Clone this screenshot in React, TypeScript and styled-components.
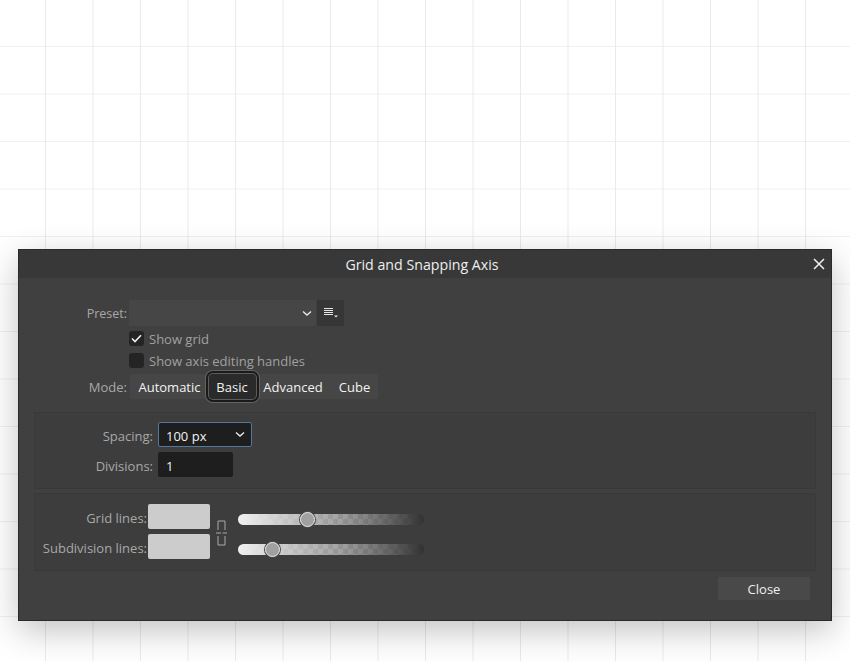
import React from "react";
import styled, { createGlobalStyle } from "styled-components";

const GlobalStyle = createGlobalStyle`
  html, body {
    margin: 0;
    height: 100%;
    overflow: hidden;
    background: #fff;
  }
  * {
    box-sizing: border-box;
  }
`;

const Canvas = styled.div`
  width: 850px;
  height: 661px;
  padding: 249px 18px 0;
  background-color: #fff;
  background-image: linear-gradient(to right, #eaeaec 1px, transparent 1px),
    linear-gradient(to bottom, #f0f0f1 1px, transparent 1px);
  background-size: 47.5px 47.5px;
  background-position: 45px 46px;
  font-family: "Open Sans", "Noto Sans", sans-serif;
  font-size: 13px;
`;

const Dialog = styled.div`
  width: 814px;
  height: 372px;
  background: #404040;
  border: 1px solid #2a2a2a;
  box-shadow: 0 10px 32px rgba(0, 0, 0, 0.24);
  display: flex;
  flex-direction: column;
`;

const TitleBar = styled.div`
  height: 28px;
  flex: none;
  background: #383838;
  color: #eee;
  font-size: 14.2px;
  padding-right: 6px;
  display: flex;
  align-items: center;
  justify-content: center;
  position: relative;
`;

const CloseX = styled.svg`
  position: absolute;
  right: 6px;
  top: 8px;
  width: 12px;
  height: 12px;
`;

const Body = styled.div`
  flex: 1;
  padding: 22px 15px 0;
  display: flex;
  flex-direction: column;
`;

const Row = styled.div<{ $h: number; $mb?: number }>`
  display: flex;
  align-items: center;
  height: ${(p) => p.$h}px;
  margin-bottom: ${(p) => p.$mb ?? 0}px;
`;

const Label = styled.div<{ $w: number; $gap?: number }>`
  width: ${(p) => p.$w}px;
  margin-right: ${(p) => p.$gap ?? 2}px;
  flex: none;
  text-align: right;
  color: #a8a8a8;
  white-space: nowrap;
`;

const PresetLabel = styled(Label)`
  font-size: 12.5px;
`;

const PanelLabel = styled(Label)`
  padding-top: 2px;
`;

const PresetSelect = styled.div`
  width: 187px;
  height: 26px;
  background: #464646;
  display: flex;
  align-items: center;
  justify-content: flex-end;
  padding-right: 4px;
`;

const MenuButton = styled.div`
  width: 27px;
  height: 26px;
  margin-left: 1px;
  background: #363636;
  display: flex;
  align-items: center;
  justify-content: center;
`;

const CheckRow = styled.div<{ $mb?: number }>`
  display: flex;
  align-items: center;
  gap: 5px;
  height: 15px;
  margin-left: 95px;
  margin-bottom: ${(p) => p.$mb ?? 0}px;
  color: #a0a0a0;
`;

const CheckBox = styled.div`
  width: 15px;
  height: 15px;
  border-radius: 3px;
  background: #242424;
  display: flex;
  align-items: center;
  justify-content: center;
`;

const Segments = styled.div`
  display: flex;
  align-items: center;
  height: 25px;
  margin-left: 1px;
  background: #464646;
  border-radius: 2px;
`;

const Segment = styled.div<{ $w: number; $pl?: number }>`
  width: ${(p) => p.$w}px;
  height: 25px;
  padding-left: ${(p) => p.$pl ?? 0}px;
  display: flex;
  align-items: center;
  justify-content: center;
  color: #f2f2f2;
  white-space: nowrap;
`;

const ActiveSegment = styled(Segment)`
  margin: 0 2.5px;
  background: #2a2a2a;
  border-radius: 4px;
  box-shadow: 0 0 0 1px #5c5c5c, 0 0 0 3px #1a1a1a, 0 0 0 4px #626262;
`;

const Panel = styled.div<{ $h: number; $mb?: number }>`
  height: ${(p) => p.$h}px;
  margin-bottom: ${(p) => p.$mb ?? 0}px;
  background: #3d3d3d;
  border: 1px solid #393939;
  flex: none;
`;

const SpacingPanel = styled(Panel)`
  padding-top: 9px;
`;

const SpacingSelect = styled.div`
  width: 94px;
  height: 25px;
  background: #1e1e1e;
  border: 1px solid #52789b;
  border-radius: 2px;
  color: #f2f2f2;
  display: flex;
  align-items: center;
  justify-content: space-between;
  padding: 0 6px 0 7px;
`;

const FieldValue = styled.span`
  padding-top: 2px;
`;

const NumberInput = styled.div`
  width: 75px;
  height: 25px;
  background: #1e1e1e;
  border-radius: 2px;
  color: #f2f2f2;
  display: flex;
  align-items: center;
  padding-left: 8px;
`;

const ColourPanel = styled(Panel)`
  display: flex;
  padding-top: 10px;
`;

const ColourCol = styled.div`
  display: flex;
  flex-direction: column;
  gap: 5px;
`;

const Swatch = styled.div`
  width: 62px;
  height: 25px;
  background: #cccccc;
  border-radius: 2px;
`;

const LinkIcon = styled.svg`
  width: 11px;
  height: 26px;
  margin: 16px 0 0 6px;
  flex: none;
`;

const SliderCol = styled.div`
  display: flex;
  flex-direction: column;
  gap: 19px;
  margin: 10px 0 0 11px;
`;

const Track = styled.div`
  position: relative;
  width: 186px;
  height: 11px;
  border-radius: 6px;
  background-color: #3d3d3d;
  background-image: linear-gradient(to right, rgba(240, 240, 240, 1) 0, rgba(240, 240, 240, 0.2) 55%, transparent 100%),
    linear-gradient(to right, transparent 55%, rgba(50, 50, 50, 1) 100%),
    conic-gradient(#8f8f8f 25%, #7c7c7c 0 50%, #8f8f8f 0 75%, #7c7c7c 0);
  background-size: 100% 100%, 100% 100%, 10px 10px;
`;

const Thumb = styled.div`
  position: absolute;
  top: 50%;
  width: 15px;
  height: 15px;
  margin: -7.5px 0 0 -7.5px;
  border-radius: 50%;
  background: #a0a0a0;
  border: 1.5px solid #ececec;
  box-shadow: 0 0 0 1px #4a4a4a;
`;

const Footer = styled.div`
  display: flex;
  justify-content: flex-end;
  padding-right: 6px;
`;

const CloseButton = styled.div`
  width: 92px;
  height: 23px;
  background: #494949;
  color: #f0f0f0;
  display: flex;
  align-items: center;
  justify-content: center;
`;

const Chevron = () => (
  <svg width="10" height="7" viewBox="0 0 10 7">
    <path d="M1 1.5 L5 5 L9 1.5" fill="none" stroke="#e8e8e8" strokeWidth="1.4" />
  </svg>
);

export default function App() {
  return (
    <>
      <GlobalStyle />
      <Canvas>
        <Dialog>
          <TitleBar>
            Grid and Snapping Axis
            <CloseX viewBox="0 0 12 12">
              <path d="M1 1 L11 11 M11 1 L1 11" stroke="#f0f0f0" strokeWidth="1.5" />
            </CloseX>
          </TitleBar>
          <Body>
            <Row $h={26} $mb={5}>
              <PresetLabel $w={93} $gap={2}>Preset:</PresetLabel>
              <PresetSelect>
                <Chevron />
              </PresetSelect>
              <MenuButton>
                <svg width="14" height="12" viewBox="0 0 14 12">
                  <path d="M0 1.5 H9 M0 3.5 H9 M0 5.5 H9 M0 7.5 H9" stroke="#e6e6e6" strokeWidth="1" />
                  <path d="M10 8.5 H14 L12 10.5 Z" fill="#e6e6e6" />
                </svg>
              </MenuButton>
            </Row>
            <CheckRow $mb={7}>
              <CheckBox>
                <svg width="11" height="9" viewBox="0 0 11 9">
                  <path d="M1 4.5 L4 7.5 L10 1.2" fill="none" stroke="#f0f0f0" strokeWidth="1.6" />
                </svg>
              </CheckBox>
              Show grid
            </CheckRow>
            <CheckRow $mb={6}>
              <CheckBox />
              Show axis editing handles
            </CheckRow>
            <Row $h={25} $mb={13}>
              <Label $w={93} $gap={2}>Mode:</Label>
              <Segments>
                <Segment $w={76} $pl={3}>Automatic</Segment>
                <ActiveSegment $w={47}>Basic</ActiveSegment>
                <Segment $w={70}>Advanced</Segment>
                <Segment $w={50} $pl={3}>Cube</Segment>
              </Segments>
            </Row>
            <SpacingPanel $h={77} $mb={4}>
              <Row $h={25} $mb={5}>
                <PanelLabel $w={118} $gap={5}>Spacing:</PanelLabel>
                <SpacingSelect>
                  <FieldValue>100 px</FieldValue>
                  <Chevron />
                </SpacingSelect>
              </Row>
              <Row $h={25}>
                <PanelLabel $w={118} $gap={5}>Divisions:</PanelLabel>
                <NumberInput>
                  <FieldValue>1</FieldValue>
                </NumberInput>
              </Row>
            </SpacingPanel>
            <ColourPanel $h={78} $mb={6}>
              <ColourCol>
                <Row $h={25}>
                  <PanelLabel $w={112} $gap={1}>Grid lines:</PanelLabel>
                  <Swatch />
                </Row>
                <Row $h={25}>
                  <PanelLabel $w={112} $gap={1}>Subdivision lines:</PanelLabel>
                  <Swatch />
                </Row>
              </ColourCol>
              <LinkIcon viewBox="0 0 11 26">
                <path
                  d="M2 10 V1 H9 V10 M2 16 V25 H9 V16 M0 13 H5 M6.5 13 H11"
                  fill="none"
                  stroke="#aaaaaa"
                  strokeWidth="1"
                />
              </LinkIcon>
              <SliderCol>
                <Track>
                  <Thumb style={{ left: "37.2%" }} />
                </Track>
                <Track>
                  <Thumb style={{ left: "18.6%" }} />
                </Track>
              </SliderCol>
            </ColourPanel>
            <Footer>
              <CloseButton>Close</CloseButton>
            </Footer>
          </Body>
        </Dialog>
      </Canvas>
    </>
  );
}
